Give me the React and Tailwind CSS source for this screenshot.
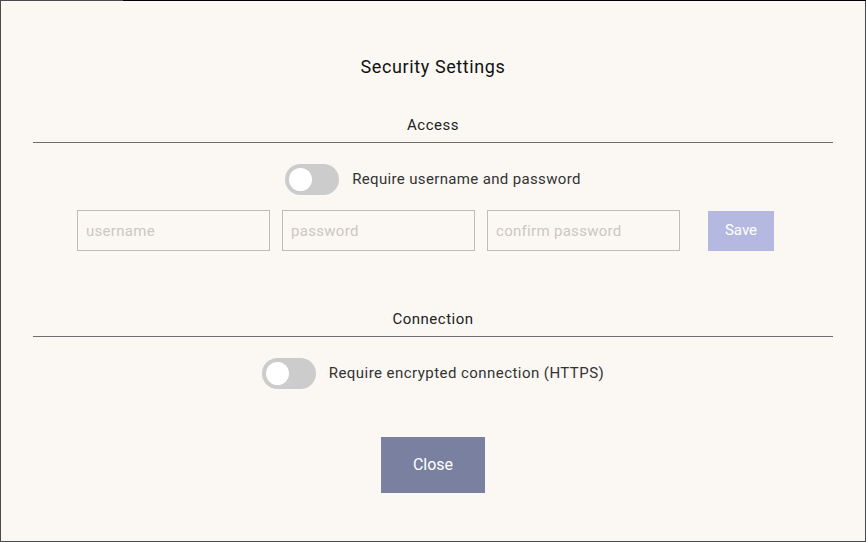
function Toggle() {
  return (
    <div className="w-[54px] h-[31px] rounded-full bg-[#cccccc] flex items-center px-[4px] shrink-0">
      <div className="w-[23px] h-[23px] rounded-full bg-white" />
    </div>
  );
}

function Section({ title }) {
  return (
    <>
      <h3 className="text-[15px] leading-[20px] tracking-[0.5px] text-[#222]">{title}</h3>
      <div className="self-stretch mx-[32px] mt-[7px] h-px bg-[#6e6e6e]" />
    </>
  );
}

export default function App() {
  const inputs = ["username", "password", "confirm password"];
  return (
    <div
      className="w-[866px] h-[542px] flex flex-col bg-[#fbf8f3] border-x border-b border-[#4a4a4a]"
      style={{ fontFamily: "Roboto, 'Noto Sans', sans-serif" }}
    >
      <div className="flex h-px shrink-0 -mx-px">
        <div className="w-[123px] bg-[#4a4a4a]" />
        <div className="flex-1 bg-black" />
      </div>

      <div className="flex flex-col items-center">
        <h2 className="mt-[54px] text-[18px] leading-[24px] tracking-[0.6px] text-[#111]">Security Settings</h2>

        <div className="mt-[36px] self-stretch flex flex-col items-center">
          <Section title="Access" />
        </div>

        <div className="mt-[21px] flex items-center gap-[13px]">
          <Toggle />
          <span className="text-[15px] tracking-[0.35px] text-[#333]">Require username and password</span>
        </div>

        <div className="mt-[15px] self-stretch flex items-center pl-[76px]">
          <div className="flex gap-[12px]">
            {inputs.map((p) => (
              <input
                key={p}
                placeholder={p}
                className="w-[193px] h-[41px] border border-[#c0bcb6] bg-transparent px-[8px] text-[15px] tracking-[0.3px] placeholder:text-[#cbc7c1] outline-none"
              />
            ))}
          </div>
          <button className="ml-[28px] w-[66px] h-[40px] bg-[#b5b9e2] text-white text-[15px]">
            Save
          </button>
        </div>

        <div className="mt-[58px] self-stretch flex flex-col items-center">
          <Section title="Connection" />
        </div>

        <div className="mt-[21px] flex items-center gap-[13px]">
          <Toggle />
          <span className="text-[15px] tracking-[0.45px] text-[#333]">Require encrypted connection (HTTPS)</span>
        </div>

        <button className="mt-[48px] w-[104px] h-[56px] bg-[#7a80a0] text-white text-[16px]">
          Close
        </button>
      </div>
    </div>
  );
}
